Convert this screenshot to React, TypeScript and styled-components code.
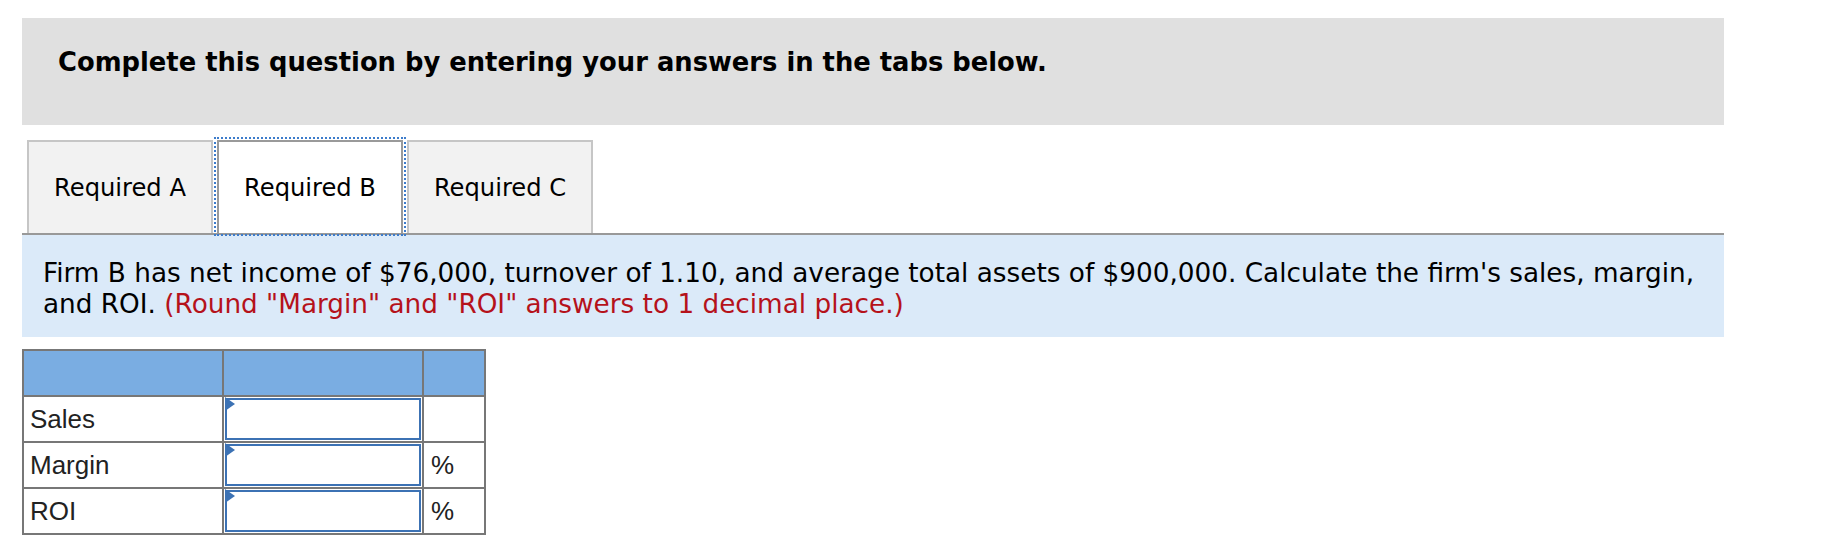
import React from "react";
import styled, { createGlobalStyle } from "styled-components";

const Global = createGlobalStyle`
  html, body { margin: 0; padding: 0; background: #fff; }
  body { font-family: "DejaVu Sans", Verdana, sans-serif; color: #000; }
`;

const Page = styled.div`
  width: 1702px;
  padding: 18px 0 0 22px;
  display: flex;
  flex-direction: column;
  align-items: stretch;
`;

const Banner = styled.div`
  background: #e0e0e0;
  height: 107px;
  box-sizing: border-box;
  padding: 29px 36px 0 36px;
`;

const BannerTitle = styled.h2`
  margin: 0;
  font-family: "DejaVu Sans", Verdana, sans-serif;
  font-weight: bold;
  font-size: 25.8px;
  line-height: 30px;
  color: #000;
`;

const TabStrip = styled.div`
  margin-top: 15px;
  display: flex;
  align-items: flex-end;
  gap: 4px;
  padding-left: 5px;
  border-bottom: 2px solid #999;
  height: 93px;
`;

const Tab = styled.button<{ $active?: boolean }>`
  width: 186px;
  height: 93px;
  box-sizing: border-box;
  margin: 0;
  padding: 0;
  display: flex;
  align-items: center;
  justify-content: center;
  font-family: "DejaVu Sans", Verdana, sans-serif;
  font-size: 24.2px;
  color: #000;
  cursor: pointer;
  background: ${(p) => (p.$active ? "#fff" : "#f2f2f2")};
  border: 2px solid ${(p) => (p.$active ? "#9a9a9a" : "#c6c6c6")};
  border-bottom: none;
  outline: ${(p) => (p.$active ? "2px dotted #3d7ccb" : "none")};
  outline-offset: 1px;
  position: relative;
  z-index: ${(p) => (p.$active ? 1 : 0)};
`;

const Prompt = styled.div`
  background: #dbeaf9;
  box-sizing: border-box;
  height: 102px;
  padding: 23px 22px 0 21px;
  font-family: "DejaVu Sans", Verdana, sans-serif;
  font-size: 26.3px;
  line-height: 31px;
  color: #000;
  white-space: nowrap;
`;

const Note = styled.span`
  color: #b5121b;
`;

const AnswerTable = styled.table`
  align-self: flex-start;
  margin-top: 12px;
  border-collapse: collapse;
  font-family: "Liberation Sans", Arial, sans-serif;
  font-size: 26px;
  color: #222;
`;

const HeadCell = styled.th<{ $w: number }>`
  width: ${(p) => p.$w}px;
  min-width: ${(p) => p.$w}px;
  max-width: ${(p) => p.$w}px;
  height: 44px;
  padding: 0;
  background: #7aade2;
  border: 2px solid #777;
`;

const Row = styled.tr`
  height: 46px;
`;

const LabelCell = styled.td`
  border: 2px solid #777;
  padding: 0 6px;
  height: 44px;
  vertical-align: middle;
`;

const InputCell = styled.td`
  border: 2px solid #777;
  padding: 1px;
  height: 42px;
  position: relative;
`;

const AnswerInput = styled.input`
  display: block;
  width: 100%;
  min-width: 0;
  height: 42px;
  box-sizing: border-box;
  border: 2px solid #3c72b4;
  margin: 0;
  padding: 0 6px;
  font-family: "Liberation Sans", Arial, sans-serif;
  font-size: 24px;
  background: #fff;
  outline: none;
`;

const Flag = styled.span`
  position: absolute;
  left: 1px;
  top: 0;
  width: 0;
  height: 0;
  border-top: 7px solid transparent;
  border-bottom: 7px solid transparent;
  border-left: 10px solid #3c72b4;
`;

const UnitCell = styled.td`
  border: 2px solid #777;
  padding: 0 7px;
  height: 44px;
`;

const rows = [
  { label: "Sales", unit: "" },
  { label: "Margin", unit: "%" },
  { label: "ROI", unit: "%" },
];

export default function App() {
  return (
    <>
      <Global />
      <Page>
        <Banner>
          <BannerTitle>Complete this question by entering your answers in the tabs below.</BannerTitle>
        </Banner>
        <TabStrip>
          <Tab>Required A</Tab>
          <Tab $active>Required B</Tab>
          <Tab>Required C</Tab>
        </TabStrip>
        <Prompt>
          Firm B has net income of $76,000, turnover of 1.10, and average total assets of $900,000. Calculate the firm's sales, margin,
          <br />
          and ROI. <Note>(Round "Margin" and "ROI" answers to 1 decimal place.)</Note>
        </Prompt>
        <AnswerTable>
          <thead>
            <tr>
              <HeadCell $w={198} />
              <HeadCell $w={198} />
              <HeadCell $w={60} />
            </tr>
          </thead>
          <tbody>
            {rows.map((r) => (
              <Row key={r.label}>
                <LabelCell>{r.label}</LabelCell>
                <InputCell>
                  <AnswerInput type="text" aria-label={r.label} />
                  <Flag />
                </InputCell>
                <UnitCell>{r.unit}</UnitCell>
              </Row>
            ))}
          </tbody>
        </AnswerTable>
      </Page>
    </>
  );
}
